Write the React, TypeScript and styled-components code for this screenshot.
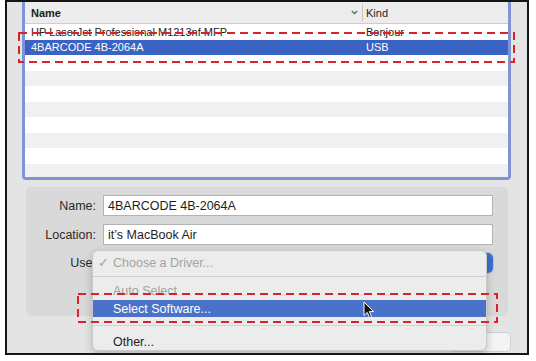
import React from 'react'
import styled, { createGlobalStyle } from 'styled-components'

type Printer = { name: string; kind: string; selected?: boolean }

const printers: Printer[] = [
  { name: 'HP LaserJet Professional M1213nf MFP', kind: 'Bonjour' },
  { name: '4BARCODE 4B-2064A', kind: 'USB', selected: true },
]

const EMPTY_ROWS = 8

const App = () => {
  const rows: Printer[] = [...printers, ...Array.from({ length: EMPTY_ROWS }, () => ({ name: '', kind: '' }))]

  return (
    <>
      <GlobalStyle />
      <Frame>
        <Table>
          <HeaderRow>
            <HeaderCell>
              Name
              <svg width="7" height="5" viewBox="0 0 7 5">
                <path d="M0.8 0.8 L3.5 3.6 L6.2 0.8" fill="none" stroke="#555" strokeWidth="1.2" />
              </svg>
            </HeaderCell>
            <KindHeader>Kind</KindHeader>
          </HeaderRow>
          {rows.map((row, i) => (
            <Row key={i} $odd={i % 2 === 1} $selected={row.selected}>
              <NameCell>{row.name}</NameCell>
              <KindCell>{row.kind}</KindCell>
            </Row>
          ))}
        </Table>

        <Panel>
          <FormRow>
            <Label>Name:</Label>
            <Field>4BARCODE 4B-2064A</Field>
          </FormRow>
          <FormRow>
            <Label>Location:</Label>
            <Field>it’s MacBook Air</Field>
          </FormRow>
          <FormRow $gap={8}>
            <Label>Use:</Label>
            {/* the popup's title is hidden under the open menu */}
            <PopupButton>
              <PopupCap>
                <svg width="7" height="11" viewBox="0 0 7 11">
                  <path d="M1 4 L3.5 1.5 L6 4 M1 7 L3.5 9.5 L6 7" fill="none" stroke="#fff" strokeWidth="1.2" />
                </svg>
              </PopupCap>
            </PopupButton>
          </FormRow>
        </Panel>

        <Footer>
          <Button />
        </Footer>

        <Menu>
          <MenuItem $disabled>
            <Check>✓</Check>Choose a Driver...
          </MenuItem>
          <Separator $top={5} $bottom={5} />
          <MenuItem $disabled $height={18}>
            <Check />Auto Select
          </MenuItem>
          <MenuItem $active>
            <Check />Select Software...
          </MenuItem>
          <Separator $top={8} $bottom={8} />
          <MenuItem $height={16}>
            <Check />Other...
          </MenuItem>
        </Menu>

        <Annotations width="520" height="351" viewBox="0 0 520 351">
          <rect x="12" y="31" width="495" height="29" />
          <rect x="71" y="292" width="419" height="28" />
        </Annotations>

        <Cursor width="12" height="18" viewBox="0 0 12 18">
          <path
            d="M1 1 L1 14.5 L4.2 11.4 L6.6 16.6 L8.6 15.7 L6.3 10.6 L10.6 10.6 Z"
            fill="#111"
            stroke="#fff"
            strokeWidth="1"
            strokeLinejoin="round"
          />
        </Cursor>
      </Frame>
    </>
  )
}

const GlobalStyle = createGlobalStyle`
  html, body {
    margin: 0;
    background: #ffffff;
  }

  body {
    font-family: "Liberation Sans", Arial, sans-serif;
    color: #222;
  }
`

const Frame = styled.div`
  position: relative;
  box-sizing: border-box;
  display: flex;
  flex-direction: column;

  margin-left: 5px;
  width: 524px;
  height: 355px;

  border: 2px solid #151515;
  background: #e4e4e4;
  overflow: hidden;
`

const Table = styled.div`
  box-sizing: border-box;
  display: flex;
  flex-direction: column;

  margin: -3px 0 0 15px;
  width: 489px;
  height: 181px;

  border: 3px solid #7f94d4;
  border-radius: 0 0 4px 4px;
  background: #fff;
  overflow: hidden;
`

const HeaderRow = styled.div`
  display: grid;
  grid-template-columns: 337px 1fr;
  flex: none;

  height: 22px;

  background: #ececec;
  border-bottom: 1px solid #cdcdcd;
  box-sizing: border-box;
`

const HeaderCell = styled.div`
  display: flex;
  align-items: center;
  justify-content: space-between;

  padding: 0 4px 0 6px;

  font-size: 11px;
  font-weight: bold;
  color: #1e1e1e;
`

const KindHeader = styled(HeaderCell)`
  justify-content: flex-start;
  margin: 2px 0;
  padding-left: 3px;
  border-left: 1px solid #c8c8c8;
  font-weight: normal;
  color: #1e1e1e;
`

const Row = styled.div<{ $odd: boolean; $selected?: boolean }>`
  display: grid;
  grid-template-columns: 337px 1fr;
  align-items: center;
  flex: none;

  height: 15.5px;

  font-size: 11px;
  background: ${(p) => (p.$selected ? '#3b63c3' : p.$odd ? '#f0f0f0' : '#ffffff')};
  color: ${(p) => (p.$selected ? '#ffffff' : '#1e1e1e')};
`

const NameCell = styled.div`
  padding-left: 6px;
  white-space: nowrap;
`

const KindCell = styled.div`
  padding-left: 4px;
  white-space: nowrap;
`

const Panel = styled.div`
  box-sizing: border-box;
  display: flex;
  flex-direction: column;

  margin: 7px 0 0 19px;
  padding-top: 8px;
  width: 482px;
  height: 129px;

  border-radius: 5px;
  background: #d9d9d9;
`

const FormRow = styled.div<{ $gap?: number }>`
  display: flex;
  align-items: center;
  gap: 7px;

  & + & {
    margin-top: ${(p) => p.$gap ?? 12}px;
  }
`

const Label = styled.div`
  width: 70px;
  text-align: right;

  font-size: 12.5px;
  color: #2a2a2a;
`

const Field = styled.div`
  box-sizing: border-box;
  display: flex;
  align-items: center;

  padding-left: 4px;
  width: 390px;
  height: 21px;

  border: 1px solid #b3b3b3;
  background: #fff;

  font-size: 12.5px;
  color: #1e1e1e;
`

const PopupButton = styled.div`
  box-sizing: border-box;
  display: flex;
  justify-content: flex-end;

  width: 390px;
  height: 20px;

  border-radius: 5px;
  background: #fff;
  box-shadow: 0 0 0 1px #c4c4c4;
  overflow: hidden;
`

const PopupCap = styled.div`
  display: flex;
  align-items: center;
  justify-content: center;

  width: 18px;
  background: #3f6fd5;
`

const Footer = styled.div`
  display: flex;
  justify-content: flex-end;

  margin-top: 16px;
  padding-right: 16px;
`

const Button = styled.div`
  box-sizing: border-box;

  width: 64px;
  height: 20px;

  border: 1px solid #d0d0d0;
  border-radius: 5px;
  background: #f4f4f4;
`

const Menu = styled.div`
  position: absolute;
  left: 85px;
  top: 248px;
  box-sizing: border-box;

  padding-top: 3px;
  width: 395px;
  height: 101px;

  border: 1px solid #c9c9c9;
  border-radius: 6px;
  background: #ececec;
  box-shadow: 0 3px 8px rgba(0, 0, 0, 0.22);
  overflow: hidden;
`

const MenuItem = styled.div<{ $active?: boolean; $disabled?: boolean; $height?: number }>`
  display: flex;
  align-items: center;

  padding-left: 5px;
  height: ${(p) => p.$height ?? 17}px;

  font-size: 12.5px;
  background: ${(p) => (p.$active ? '#4a72c9' : 'transparent')};
  color: ${(p) => (p.$active ? '#fff' : p.$disabled ? '#a2a2a2' : '#1e1e1e')};
`

const Check = styled.span`
  display: inline-block;
  width: 15px;
`

const Separator = styled.div<{ $top: number; $bottom: number }>`
  margin: ${(p) => p.$top}px 0 ${(p) => p.$bottom}px;
  height: 1px;
  background: #d2d2d2;
`

const Annotations = styled.svg`
  position: absolute;
  left: 0;
  top: 0;
  pointer-events: none;

  rect {
    fill: none;
    stroke: #d7242a;
    stroke-width: 2;
    stroke-dasharray: 8 5;
  }
`

const Cursor = styled.svg`
  position: absolute;
  left: 356px;
  top: 299px;
`

export default App
